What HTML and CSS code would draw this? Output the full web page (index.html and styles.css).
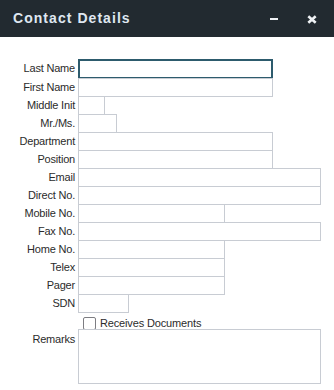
FILE: index.html
```html
<!DOCTYPE html>
<html>
<head>
<meta charset="utf-8">
<link rel="stylesheet" href="styles.css">
</head>
<body>
<div class="window">
  <div class="titlebar">
    <div class="title">Contact Details</div>
    <div class="controls">
      <span class="min"></span>
      <svg class="close" width="10" height="9" viewBox="0 0 10 9"><path d="M1.3 1.2 L8.7 7.8 M8.7 1.2 L1.3 7.8" stroke="#eef1f4" stroke-width="2.6" stroke-linecap="butt" fill="none"/></svg>
    </div>
  </div>
  <form class="form">
    <div class="row first"><label class="lbl">Last Name</label><input class="fld w195 focus" type="text"></div>
    <div class="row"><label class="lbl">First Name</label><input class="fld w195" type="text"></div>
    <div class="row"><label class="lbl">Middle Init</label><input class="fld w27" type="text"></div>
    <div class="row"><label class="lbl">Mr./Ms.</label><input class="fld w39" type="text"></div>
    <div class="row"><label class="lbl">Department</label><input class="fld w195" type="text"></div>
    <div class="row"><label class="lbl">Position</label><input class="fld w195" type="text"></div>
    <div class="row"><label class="lbl">Email</label><input class="fld w243" type="text"></div>
    <div class="row"><label class="lbl">Direct No.</label><input class="fld w243" type="text"></div>
    <div class="row"><label class="lbl">Mobile No.</label><input class="fld w147" type="text"></div>
    <div class="row"><label class="lbl">Fax No.</label><input class="fld w243" type="text"></div>
    <div class="row"><label class="lbl">Home No.</label><input class="fld w147" type="text"></div>
    <div class="row"><label class="lbl">Telex</label><input class="fld w147" type="text"></div>
    <div class="row"><label class="lbl">Pager</label><input class="fld w147" type="text"></div>
    <div class="row"><label class="lbl">SDN</label><input class="fld w51" type="text"></div>
    <div class="checkrow"><span class="box"></span><span class="checktext">Receives Documents</span></div>
    <div class="row remarks"><label class="lbl">Remarks</label><textarea class="area"></textarea></div>
  </form>
</div>
</body>
</html>
```
FILE: styles.css
```css
html, body {
  margin: 0;
  padding: 0;
  background: #ffffff;
}
.window {
  width: 334px;
  font-family: "Liberation Sans", Arial, sans-serif;
}
.titlebar {
  height: 37px;
  background: #222a30;
  display: flex;
  align-items: flex-start;
}
.title {
  margin-left: 13px;
  margin-top: 10px;
  font-size: 14px;
  line-height: 17px;
  font-weight: bold;
  letter-spacing: 1.05px;
  color: #dfe7f0;
}
.controls {
  margin-left: auto;
  margin-right: 17px;
  display: flex;
  align-items: flex-start;
}
.min {
  display: block;
  width: 8px;
  height: 2px;
  margin-top: 18px;
  background: #eef1f4;
}
.close {
  display: block;
  margin-left: 29px;
  margin-top: 15px;
}
.form {
  margin: 22px 0 0 0;
  padding: 0;
}
.row {
  display: flex;
  align-items: flex-start;
  height: 18px;
}
.row.first {
  height: 19px;
}
.lbl {
  width: 78px;
  box-sizing: border-box;
  padding-right: 3px;
  text-align: right;
  font-size: 11px;
  letter-spacing: -0.2px;
  line-height: 19px;
  color: #2b2b2b;
  flex: none;
}
.fld {
  box-sizing: border-box;
  height: 19px;
  margin: 0;
  padding: 0 3px;
  border: 1px solid #c8ccd3;
  border-radius: 0;
  background: #ffffff;
  outline: none;
  flex: none;
  font-family: inherit;
  font-size: 11px;
}
.fld.focus {
  height: 20px;
  border: 2px solid #2d5b6d;
}
.w27 { width: 27px; }
.w39 { width: 39px; }
.w51 { width: 51px; }
.w147 { width: 147px; }
.w195 { width: 195px; }
.w243 { width: 243px; }
.checkrow {
  display: flex;
  align-items: flex-start;
  height: 17px;
  padding-top: 1px;
  box-sizing: border-box;
}
.box {
  display: block;
  box-sizing: border-box;
  width: 13px;
  height: 13px;
  margin-left: 83px;
  margin-top: 4px;
  border: 1px solid #7d7d82;
  border-radius: 2px;
  background: #ffffff;
}
.checktext {
  margin-left: 4px;
  font-size: 11px;
  letter-spacing: -0.15px;
  line-height: 13px;
  margin-top: 4px;
  color: #2b2b2b;
}
.row.remarks {
  height: 55px;
}
.remarks .lbl {
  line-height: 19px;
  padding-top: 1px;
}
.area {
  box-sizing: border-box;
  width: 243px;
  height: 55px;
  margin: 0;
  padding: 0;
  border: 1px solid #c8ccd3;
  border-radius: 0;
  resize: none;
  outline: none;
  flex: none;
}
```
